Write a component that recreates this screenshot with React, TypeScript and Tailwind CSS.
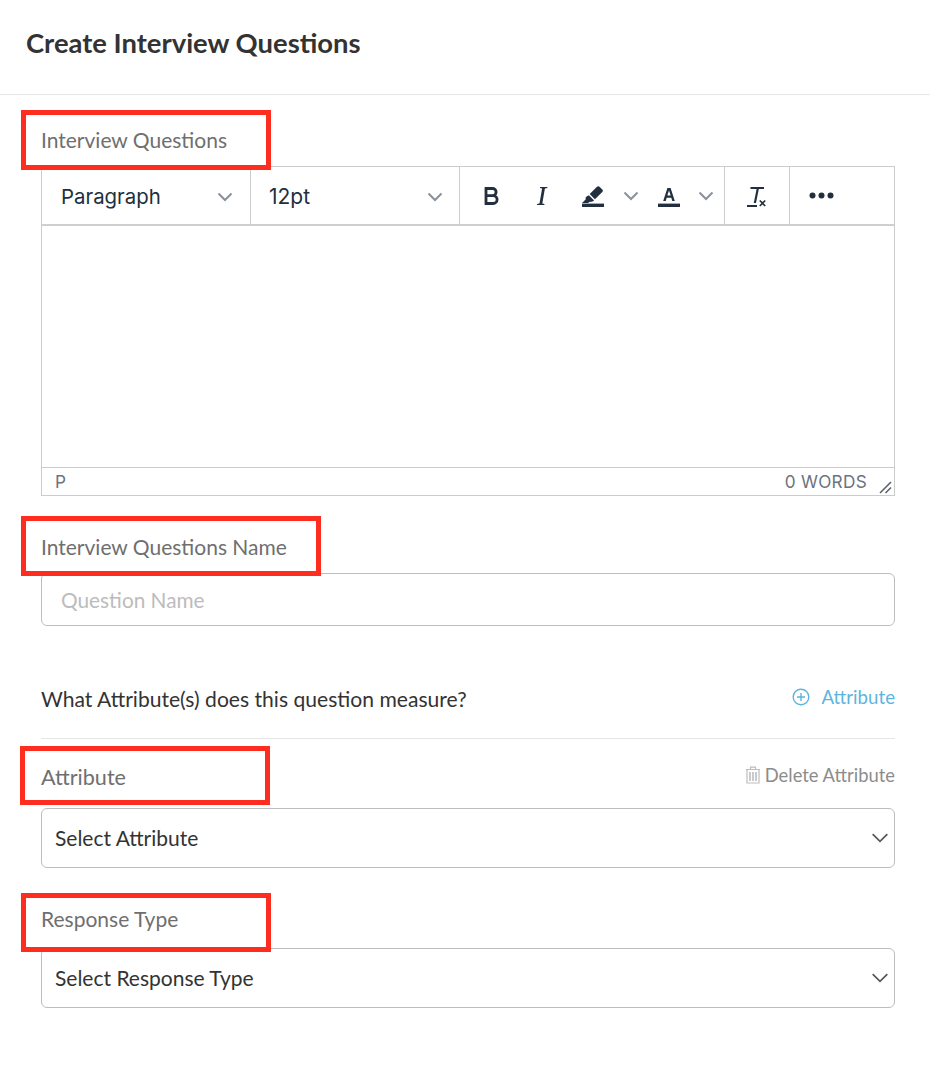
import React from "react";

const Chevron = ({ className = "", sw = 2 }: { className?: string; sw?: number }) => (
  <svg viewBox="0 0 16 10" className={className} fill="none" stroke="currentColor" strokeWidth={sw}>
    <path d="M1.5 1.5 8 8l6.5-6.5" />
  </svg>
);

const RedBox = ({ className }: { className: string }) => (
  <div className={`absolute border-[5px] border-[#ff2d20] ${className}`} />
);

const Select = ({ label, className = "" }: { label: string; className?: string }) => (
  <div className={`flex h-[60px] items-center justify-between rounded-[6px] border border-[#bdbdbd] pl-[13px] pr-[5px] text-[21px] text-[#333] ${className}`}>
    <span>{label}</span>
    <Chevron className="h-[12px] w-[18px] text-[#555]" sw={1.5} />
  </div>
);

export default function App() {
  return (
    <div className="relative h-[1074px] w-[930px] overflow-hidden bg-white font-['Lato',sans-serif]">
      <header className="flex h-[95px] items-center border-b border-[#e6e6e6] pl-[26px] pb-[8px]">
        <h1 className="text-[27.4px] font-bold text-[#333]">Create Interview Questions</h1>
      </header>

      <main className="pl-[41px] pr-[35px]">
        <label className="flex h-[71px] items-center pt-[19px] text-[21px] text-[#6f6f6f]">Interview Questions</label>

        <div className="flex h-[330px] flex-col border border-[#cccccc] font-['Inter',sans-serif] text-[#222f3e]">
          <div className="flex h-[59px] border-b-2 border-[#cfcfcf]">
            <div className="flex w-[209px] items-center justify-between border-r border-[#cccccc] pl-[19px] pr-[17px] pt-[3px] text-[20.4px]">
              <span>Paragraph</span>
              <Chevron className="h-[10px] w-[16px] text-[#8a9199]" />
            </div>
            <div className="flex w-[209px] items-center justify-between border-r border-[#cccccc] pl-[18px] pr-[16px] pt-[2px] text-[21px]">
              <span>12pt</span>
              <Chevron className="h-[10px] w-[16px] text-[#8a9199]" />
            </div>
            <div className="flex w-[265px] items-center border-r border-[#cccccc] pl-[24px]">
              <svg viewBox="0 0 16 18" className="h-[18px] w-[16px]" fill="none" stroke="currentColor" strokeWidth="2.8">
                <path d="M2 1.5h6.5a3.5 3.5 0 0 1 0 7.2H2zM2 8.7h7.2a3.9 3.9 0 0 1 0 7.8H2z" />
              </svg>
              <svg viewBox="0 0 12 20" className="ml-[36px] h-[20px] w-[12px]" fill="currentColor">
                <path d="M4.3 1h7.2l-.2 1.1-2.4.4-2.6 15 2.2.4-.2 1.1H.9l.2-1.1 2.4-.4 2.6-15-2.2-.4z" />
              </svg>
              <svg viewBox="0 0 22 21" className="ml-[34px] mt-[2px] h-[21px] w-[22px]" fill="currentColor">
                <path d="M15 .8c.7-.7 1.8-.7 2.5 0l2.8 2.6c.7.7.7 1.8 0 2.5l-7.4 7.3-5.2-5.2zM6.9 9.2l5.2 5.2-1.6 1.2-3.2.4-1.2 1H0l3.6-3.6.2-2.4z" />
                <rect x="0" y="17.6" width="22" height="3.4" />
              </svg>
              <Chevron className="ml-[19px] h-[10px] w-[16px] text-[#8a9199]" />
              <svg viewBox="0 0 22 21" className="ml-[19px] mt-[2px] h-[21px] w-[22px]" fill="currentColor">
                <path fillRule="evenodd" d="M9.4 2h3.2l4.2 13h-2.5l-1-3.2H8.7l-1 3.2H5.2zm-.1 7.6h3.4L11 4.6z" />
                <rect x="0" y="17.6" width="22" height="3.4" />
              </svg>
              <Chevron className="ml-[18px] h-[10px] w-[16px] text-[#8a9199]" />
            </div>
            <div className="flex w-[65px] items-center justify-center border-r border-[#cccccc]">
              <svg viewBox="0 0 20 20" className="mt-[2px] h-[20px] w-[20px]" fill="currentColor">
                <path d="M3.5 0H17v2h-5.2L9 16H6.8L9.6 2H3.5z" />
                <rect x="0" y="18" width="10" height="2" />
                <path d="m12.2 14 1.1-1.1 2.2 2.2 2.2-2.2 1.1 1.1-2.2 2.3 2.2 2.2-1.1 1.1-2.2-2.2-2.2 2.2-1.1-1.1 2.2-2.2z" />
              </svg>
            </div>
            <div className="flex flex-1 items-center pl-[19px]">
              <svg viewBox="0 0 25 7" className="h-[7px] w-[25px]" fill="currentColor">
                <circle cx="3.5" cy="3.5" r="3" />
                <circle cx="12.5" cy="3.5" r="3" />
                <circle cx="21.5" cy="3.5" r="3" />
              </svg>
            </div>
          </div>
          <div className="flex-1" />
          <div className="relative flex h-[28px] items-center justify-between border-t border-[#cccccc] pl-[13px] pr-[27px] text-[17.2px] text-[#6b7380]">
            <span>P</span>
            <span className="tracking-[0.3px]">0 WORDS</span>
            <svg viewBox="0 0 13 13" className="absolute bottom-[1px] right-[2px] h-[13px] w-[13px]" fill="none" stroke="#5c6570" strokeWidth="1.6">
              <path d="M1 12 12 1M6.5 12 12 6.5" />
            </svg>
          </div>
        </div>

        <label className="flex h-[77px] items-center pt-[24px] text-[21px] text-[#6f6f6f]">Interview Questions Name</label>
        <div className="flex h-[53px] items-center rounded-[6px] border border-[#bdbdbd] pl-[19px] text-[20.8px] text-[#bcbcbc]">Question Name</div>

        <div className="flex h-[113px] items-center justify-between border-b border-[#e5e5e5] pt-[33px]">
          <span className="text-[21.1px] text-[#333]">What Attribute(s) does this question measure?</span>
          <span className="mb-[3px] flex items-center text-[18.7px] text-[#5db4de]">
            <svg viewBox="0 0 18 18" className="mr-[11px] h-[18px] w-[18px]" fill="none" stroke="currentColor" strokeWidth="1.4">
              <circle cx="9" cy="9" r="7.8" />
              <path d="M9 5v8M5 9h8" />
            </svg>
            Attribute
          </span>
        </div>

        <div className="flex h-[69px] items-center justify-between">
          <label className="pt-[8px] text-[21.6px] text-[#6f6f6f]">Attribute</label>
          <span className="flex items-center pt-[4px] text-[18.4px] text-[#8c8c8c]">
            <svg viewBox="0 0 16 18" className="mr-[4px] h-[18px] w-[16px]" fill="none" stroke="#bdbdbd" strokeWidth="1.2">
              <path d="M1 3.5h14M5.5 3.5V1.2h5v2.3M2 3.5V17h12V3.5" />
              <path d="M5 6v9M8 6v9M11 6v9" strokeWidth="1.6" />
            </svg>
            Delete Attribute
          </span>
        </div>
        <Select label="Select Attribute" />

        <label className="flex h-[80px] items-center pt-[21px] text-[21px] text-[#6f6f6f]">Response Type</label>
        <Select label="Select Response Type" />
      </main>

      <RedBox className="left-[21px] top-[110px] h-[60px] w-[250px]" />
      <RedBox className="left-[21px] top-[516px] h-[60px] w-[300px]" />
      <RedBox className="left-[20px] top-[746px] h-[59px] w-[250px]" />
      <RedBox className="left-[21px] top-[893px] h-[59px] w-[250px]" />
    </div>
  );
}
